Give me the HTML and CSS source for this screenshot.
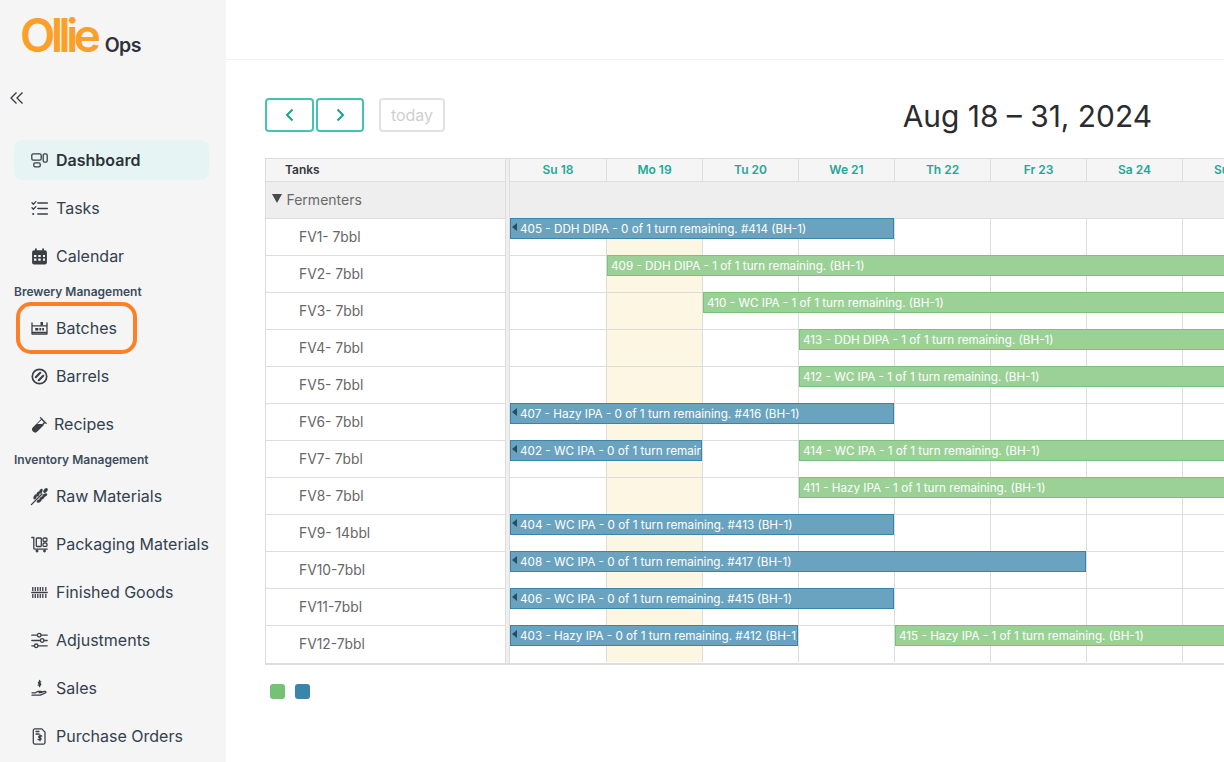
FILE: index.html
```html
<!DOCTYPE html>
<html lang="en">
<head>
<meta charset="utf-8">
<title>Ollie Ops</title>
<link rel="stylesheet" href="styles.css">
</head>
<body>
<div class="app">
  <aside class="sidebar">
    <div class="logo"><span class="logo-main">Ollie</span><span class="logo-sub">Ops</span></div>
    <button class="collapse" aria-label="Collapse">
      <svg viewBox="0 0 14 14" width="14" height="14"><path d="M6.5 1.5 1 7l5.5 5.5M12.5 1.5 7 7l5.5 5.5"/></svg>
    </button>
    <nav class="nav">
      <a class="nav-item active"><svg class="ico" viewBox="0 0 17 17"><rect x=".8" y="1.8" width="9.4" height="6.4" rx="1.4"/><rect x="2.8" y="10.8" width="6.4" height="4" rx="1.2"/><rect x="12.2" y="1.8" width="4" height="8.4" rx="1.4"/></svg>Dashboard</a>
      <a class="nav-item"><svg class="ico" viewBox="0 0 17 17"><path d="M1 2.8l1.4 1.4L4.8 1.6M1 7.8l1.4 1.4 2.4-2.6M6.8 3h9.6M6.8 8.5h9.6M6.8 14h9.6"/><circle class="solid" cx="2.2" cy="14" r="1.1"/></svg>Tasks</a>
      <a class="nav-item"><svg class="ico" viewBox="0 0 17 17"><path class="solid" fill-rule="evenodd" d="M4 .5h1.8v1.7h5.4V.5H13v1.7h.9c1.1 0 2 .9 2 2v10.2c0 1.1-.9 2-2 2H3.1c-1.1 0-2-.9-2-2V4.200c0-1.100.9-2 2-2H4zM3 7v2h2.400V7zm4.300 0v2h2.400V7zM12 7v2h2V7zM3 10.600v2.200h2.400v-2.200zm4.300 0v2.200h2.400v-2.200zm4.700 0v2.200h2v-2.200z"/></svg>Calendar</a>
      <div class="nav-label">Brewery Management</div>
      <a class="nav-item marked"><svg class="ico" viewBox="0 0 17 17"><path d="M1 3v11h15V3M1 5.800h15M1 12.400h15"/><path class="solid" d="M9.500 2h2.500v3.500H9.500zM4.200 8h3.200v2.600H4.200zM8.400 8h1.800v2.600H8.400zM11.200 8h1.800v2.600h-1.800z"/></svg>Batches</a>
      <a class="nav-item"><svg class="ico" viewBox="0 0 17 17"><circle class="ring" cx="8.500" cy="8.500" r="7.200"/><path class="thick" d="M4.800 9.200 9.200 4.800M7.800 12.200 12.200 7.800"/></svg>Barrels</a>
      <a class="nav-item narrow"><svg class="ico" viewBox="0 0 17 17"><path d="M9.400 1.600 15.200 7.400M10.400 2.800 13.800 6.200 12 8"/><path class="solid" d="M10.400 2.800 2 11.200a3.100 3.100 0 0 0 4.400 4.400L13.200 8.800 11.300 8H6.200l5.600-5.200z"/></svg>Recipes</a>
      <div class="nav-label">Inventory Management</div>
      <a class="nav-item"><svg class="ico" viewBox="0 0 17 17"><g transform="rotate(45 8.500 8.500)"><path d="M8.500 5v15"/><g class="solid"><ellipse cx="8.500" cy="0" rx="1.700" ry="2.800"/><ellipse cx="5.700" cy="3.800" rx="1.500" ry="2.700" transform="rotate(-18 5.700 3.800)"/><ellipse cx="11.300" cy="3.800" rx="1.500" ry="2.700" transform="rotate(18 11.300 3.800)"/><ellipse cx="5.700" cy="7.800" rx="1.500" ry="2.700" transform="rotate(-18 5.700 7.800)"/><ellipse cx="11.300" cy="7.800" rx="1.500" ry="2.700" transform="rotate(18 11.300 7.800)"/><ellipse cx="5.700" cy="11.800" rx="1.500" ry="2.700" transform="rotate(-18 5.700 11.800)"/><ellipse cx="11.300" cy="11.800" rx="1.500" ry="2.700" transform="rotate(18 11.300 11.800)"/></g></g></svg>Raw Materials</a>
      <a class="nav-item"><svg class="ico" viewBox="0 0 17 17"><path d="M.8 1.500h2v10.700c0 .6.400 1 1 1h12.400"/><rect x="5.300" y="2" width="5" height="8.500" rx=".8"/><rect x="12" y="2" width="4" height="3.400" rx="1.200"/><rect x="12" y="7" width="4" height="3.400" rx="1.200"/><circle cx="6" cy="15" r=".8"/><circle cx="13.500" cy="15" r=".8"/></svg>Packaging Materials</a>
      <a class="nav-item"><svg class="ico" viewBox="0 0 17 17"><path class="bars" d="M1.800 3v4M4.300 3v4M6.800 3v4M9.300 3v4M11.800 3v4M14.800 3v4M1.800 10v4M4.300 10v4M6.800 10v4M9.300 10v4M11.800 10v4M14.800 10v4"/><path d="M.8 8.500h15.400"/></svg>Finished Goods</a>
      <a class="nav-item"><svg class="ico" viewBox="0 0 17 17"><path d="M.8 3.200h5.400M10.200 3.200h6M.8 8.500h8.400M13.200 8.500h3M.8 13.800h2.400M7.200 13.800h9"/><circle cx="8.200" cy="3.200" r="1.800"/><circle cx="11.200" cy="8.500" r="1.800"/><circle cx="5.200" cy="13.800" r="1.800"/></svg>Adjustments</a>
      <a class="nav-item"><svg class="ico" viewBox="0 0 17 17"><path d="M1 12.800h3.500l2.500-1.500h3c.8 0 .8 1.400 0 1.400H8l5.500-1.200c1.500-.3 2 .9.800 1.500l-5 2.200H1M9.800 1.800H8.200c-1 0-1 1.700 0 1.700h.8c1 0 1 1.700 0 1.700H7.200M8.600 .5v6.200"/></svg>Sales</a>
      <a class="nav-item"><svg class="ico" viewBox="0 0 17 17"><path d="M3.800.9h7l3.200 3.200v10.500c0 .8-.6 1.500-1.500 1.500H3.800c-.8 0-1.500-.7-1.500-1.500V2.400c0-.8.700-1.500 1.500-1.500zM5 3.500h3M5 6h3M10.700 8H8.500c-1 0-1 1.800 0 1.800h.8c1 0 1 1.800 0 1.800H7M9 6.800v6"/></svg>Purchase Orders</a>
    </nav>
  </aside>

  <div class="content">
    <div class="topbar"></div>
    <main class="main">
      <div class="toolbar">
        <div class="tools">
          <button class="btn" aria-label="Previous"><svg viewBox="0 0 14 14" width="14" height="14"><path d="M9.500 1.500 4 7l5.500 5.500"/></svg></button>
          <button class="btn btn-next" aria-label="Next"><svg viewBox="0 0 14 14" width="14" height="14"><path d="M4.500 1.500 10 7l-5.500 5.500"/></svg></button>
          <button class="btn-today" disabled>today</button>
        </div>
        <h1 class="title">Aug 18 – 31, 2024</h1>
      </div>

      <div class="scheduler">
        <div class="resources">
          <div class="res-head">Tanks</div>
          <div class="res-group"><span class="caret"></span>Fermenters</div>
          <div class="res-row">FV1- 7bbl</div>
          <div class="res-row">FV2- 7bbl</div>
          <div class="res-row">FV3- 7bbl</div>
          <div class="res-row">FV4- 7bbl</div>
          <div class="res-row">FV5- 7bbl</div>
          <div class="res-row">FV6- 7bbl</div>
          <div class="res-row">FV7- 7bbl</div>
          <div class="res-row">FV8- 7bbl</div>
          <div class="res-row">FV9- 14bbl</div>
          <div class="res-row">FV10-7bbl</div>
          <div class="res-row">FV11-7bbl</div>
          <div class="res-row">FV12-7bbl</div>
        </div>
        <div class="divider"></div>
        <div class="timeline">
          <div class="days">
            <div class="day">Su 18</div><div class="day">Mo 19</div><div class="day">Tu 20</div><div class="day">We 21</div><div class="day">Th 22</div><div class="day">Fr 23</div><div class="day">Sa 24</div><div class="day">Su 25</div><div class="day">Mo 26</div><div class="day">Tu 27</div><div class="day">We 28</div><div class="day">Th 29</div><div class="day">Fr 30</div><div class="day">Sa 31</div>
          </div>
          <div class="tl-group"></div>
          <div class="tl-body">
            <div class="columns">
              <i></i><i class="today"></i><i></i><i></i><i></i><i></i><i></i><i></i><i></i><i></i><i></i><i></i><i></i><i></i>
            </div>
            <div class="tl-row"><div class="ev blue s1 w4">405 - DDH DIPA - 0 of 1 turn remaining. #414 (BH-1)</div></div>
            <div class="tl-row"><div class="ev green s2 w13">409 - DDH DIPA - 1 of 1 turn remaining. (BH-1)</div></div>
            <div class="tl-row"><div class="ev green s3 w12">410 - WC IPA - 1 of 1 turn remaining. (BH-1)</div></div>
            <div class="tl-row"><div class="ev green s4 w11">413 - DDH DIPA - 1 of 1 turn remaining. (BH-1)</div></div>
            <div class="tl-row"><div class="ev green s4 w11">412 - WC IPA - 1 of 1 turn remaining. (BH-1)</div></div>
            <div class="tl-row"><div class="ev blue s1 w4">407 - Hazy IPA - 0 of 1 turn remaining. #416 (BH-1)</div></div>
            <div class="tl-row"><div class="ev blue s1 w2">402 - WC IPA - 0 of 1 turn remaining. #413 (BH-1)</div><div class="ev green s4 w11">414 - WC IPA - 1 of 1 turn remaining. (BH-1)</div></div>
            <div class="tl-row"><div class="ev green s4 w11">411 - Hazy IPA - 1 of 1 turn remaining. (BH-1)</div></div>
            <div class="tl-row"><div class="ev blue s1 w4">404 - WC IPA - 0 of 1 turn remaining. #413 (BH-1)</div></div>
            <div class="tl-row"><div class="ev blue s1 w6">408 - WC IPA - 0 of 1 turn remaining. #417 (BH-1)</div></div>
            <div class="tl-row"><div class="ev blue s1 w4">406 - WC IPA - 0 of 1 turn remaining. #415 (BH-1)</div></div>
            <div class="tl-row"><div class="ev blue s1 w3">403 - Hazy IPA - 0 of 1 turn remaining. #412 (BH-1)</div><div class="ev green s5 w10">415 - Hazy IPA - 1 of 1 turn remaining. (BH-1)</div></div>
          </div>
        </div>
      </div>

      <div class="legend"><span class="swatch sw-green"></span><span class="swatch sw-blue"></span></div>
    </main>
  </div>
</div>
</body>
</html>
```
FILE: styles.css
```css
*, *::before, *::after { box-sizing: border-box; }
html, body { margin: 0; height: 100%; overflow: hidden; background: #fff; }
body { font-family: Inter, "Noto Sans", sans-serif; color: #2d3a4a; }
.app { display: flex; height: 762px; overflow: hidden; }

/* Sidebar */
.sidebar { flex: 0 0 226px; background: #f5f5f5; padding: 0 17px 0 14px; }
.logo { height: 78px; padding: 9px 0 0 6px; display: flex; align-items: baseline; white-space: nowrap; }
.logo-main { font-size: 46px; line-height: 52px; font-weight: 600; color: #fd9f28; letter-spacing: -4.4px; }
.logo-sub { font-size: 19.5px; font-weight: 600; color: #2f3238; margin-left: 8px; letter-spacing: -.6px; }
.collapse { display: block; width: 14px; height: 14px; padding: 0; border: 0; background: none; margin: 13px 0 0 -4px; }
.collapse svg { display: block; fill: none; stroke: #33393f; stroke-width: 1.3; }
.nav { margin-top: 35px; display: flex; flex-direction: column; gap: 8px; }
.nav-item { position: relative; height: 40px; display: flex; align-items: center; gap: 8px; padding-left: 17px; border-radius: 8px; font-size: 16px; color: #33414f; white-space: nowrap; }
.nav-item.active { background: #e6f5f4; font-weight: 600; color: #2c3238; }
.nav-item.narrow { gap: 6px; }
.nav-item.marked::after { content: ""; position: absolute; left: 2px; top: -6px; width: 121px; height: 52px; border: 4px solid #ff7f27; border-radius: 15px; }
.nav-label { height: 16px; font-size: 12px; line-height: 16px; font-weight: 600; color: #3c4c5e; white-space: nowrap; }
.ico { width: 17px; height: 17px; flex: none; fill: none; stroke: #3a3f45; stroke-width: 1.3; stroke-linecap: round; stroke-linejoin: round; overflow: visible; }
.ico .solid { fill: #3a3f45; stroke: none; }
.ico .ring { stroke-width: 1.7; }
.ico .thick { stroke-width: 2.2; }
.ico .bars { stroke-width: 1.300; stroke-linecap: butt; }

/* Content */
.content { flex: 1; min-width: 0; }
.topbar { height: 60px; border-bottom: 1px solid #f2f2f2; }
.main { padding: 38px 0 0 39px; }
.toolbar { display: flex; justify-content: space-between; align-items: center; height: 34px; padding-right: 72px; margin-bottom: 26px; }
.tools { display: flex; }
.btn { width: 49px; height: 34px; padding: 0; display: flex; align-items: center; justify-content: center; background: #fff; border: 2px solid #45c3b1; border-radius: 4px; }
.btn svg { display: block; fill: none; stroke: #14a58f; stroke-width: 2; }
.btn-next { width: 48px; margin-left: 2px; }
.btn-today { width: 66px; height: 34px; margin-left: 15px; padding: 0; background: #fff; border: 2px solid #e2e2e2; border-radius: 4px; font: 400 16px Inter, sans-serif; color: #cfcfcf; }
.title { margin: 2px 0 0; font-size: 29.9px; line-height: 36px; font-weight: 400; color: #2a2c30; }

/* Scheduler */
.scheduler { display: flex; width: 1589px; }
.resources { flex: 0 0 241px; border-left: 1px solid #ddd; border-right: 1px solid #ddd; border-bottom: 2px solid #ddd; }
.res-head { height: 24px; padding-left: 19px; background: #f5f5f5; border-top: 1px solid #ddd; border-bottom: 1px solid #ddd; font-size: 12px; line-height: 22px; font-weight: 600; color: #33373c; }
.res-group { height: 37px; display: flex; align-items: center; padding: 0 0 2px 6px; background: #eee; border-bottom: 1px solid #ddd; font-size: 14px; color: #6a6a6a; }
.caret { width: 0; height: 0; margin: -2px 4.500px 0 0; border-left: 5px solid transparent; border-right: 5px solid transparent; border-top: 9px solid #4a4a4a; }
.res-row { height: 37px; padding: 0 0 1px 33px; display: flex; align-items: center; border-bottom: 1px solid #ddd; font-size: 13.8px; color: #666; }
.res-row:last-child { border-bottom: 0; }
.divider { flex: 0 0 4px; background: #efefef; border-top: 1px solid #ddd; border-right: 1px solid #ddd; border-bottom: 2px solid #ddd; }
.timeline { flex: 0 0 1344px; border-bottom: 2px solid #ddd; }
.days, .columns, .tl-row { display: grid; grid-template-columns: 97px repeat(13, 96px); }
.days { height: 24px; background: #f5f5f5; border-top: 1px solid #ddd; border-bottom: 1px solid #ddd; }
.day { border-right: 1px solid #ddd; font-size: 12px; line-height: 22px; font-weight: 600; color: #22a797; text-align: center; }
.tl-group { height: 37px; background: #eee; border-bottom: 1px solid #ddd; }
.tl-body { position: relative; }
.columns { position: absolute; inset: 0; }
.columns i { border-right: 1px solid #ddd; }
.columns .today { background: #fdf6e3; }
.tl-row { position: relative; height: 37px; border-bottom: 1px solid #ddd; align-items: start; }
.tl-row:last-child { height: 36px; border-bottom: 0; }
.ev { position: relative; height: 21px; margin: -1px 1px 0 0; padding: 1px 0 0 3px; border: 1px solid; font-size: 11.7px; line-height: 18px; color: #fff; white-space: nowrap; overflow: hidden; }
.green { background: #9bd196; border-color: #7ac279; }
.blue { background: #6aa3bf; border-color: #3a84a8; padding-left: 9px; }
.blue::before { content: ""; position: absolute; left: 1px; top: 4px; border-top: 4.500px solid transparent; border-bottom: 4.500px solid transparent; border-right: 5px solid #2f4a5c; }
.s1 { grid-column-start: 1; grid-row: 1; }
.s2 { grid-column-start: 2; grid-row: 1; }
.s3 { grid-column-start: 3; grid-row: 1; }
.s4 { grid-column-start: 4; grid-row: 1; }
.s5 { grid-column-start: 5; grid-row: 1; }
.w2 { grid-column-end: span 2; }
.w3 { grid-column-end: span 3; }
.w4 { grid-column-end: span 4; }
.w6 { grid-column-end: span 6; }
.w10 { grid-column-end: span 10; }
.w11 { grid-column-end: span 11; }
.w12 { grid-column-end: span 12; }
.w13 { grid-column-end: span 13; }

.legend { display: flex; gap: 10px; margin: 19px 0 0 5px; }
.swatch { width: 15px; height: 15px; border-radius: 3px; }
.sw-green { background: #75c274; }
.sw-blue { background: #3a86ab; }
```
